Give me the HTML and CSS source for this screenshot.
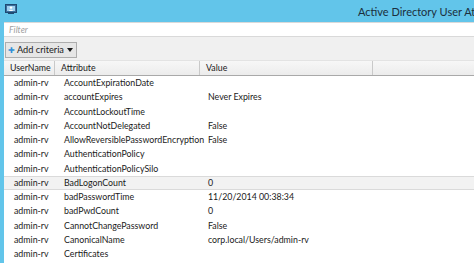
FILE: index.html
```html
<!DOCTYPE html>
<html lang="en">
<head>
    <meta charset="UTF-8">
    <title>Active Directory User Attributes</title>
    <link rel="stylesheet" href="styles.css">
</head>
<body>
    <div class="titlebar">
        <svg class="app-icon" width="12" height="10" viewBox="0 0 12 10">
            <rect x="0.5" y="0.5" width="11" height="8" fill="#3d6f9c" stroke="#1f4a73"/>
            <rect x="2" y="2" width="8" height="5" fill="#9fd0ef"/>
            <circle cx="6" cy="3.6" r="1.2" fill="#ffffff"/>
            <path d="M3.8 7 Q6 4.6 8.2 7 Z" fill="#ffffff"/>
            <rect x="3" y="9" width="6" height="1" fill="#1f4a73"/>
        </svg>
        <span class="title">Active Directory User Attributes</span>
    </div>

    <div class="window">
        <div class="filter-box">Filter</div>

        <div class="toolbar">
            <button class="add-criteria">
                <span class="plus">&#x271A;</span>Add criteria<span class="caret"></span>
            </button>
        </div>

        <div class="grid">
            <div class="grid-head">
                <div class="col col-user">UserName</div>
                <div class="col col-attr">Attribute</div>
                <div class="col col-value">Value</div>
                <div class="col col-rest"></div>
            </div>
            <div class="row"><div class="col-user">admin-rv</div><div class="col-attr">AccountExpirationDate</div><div class="col-value"></div></div>
            <div class="row"><div class="col-user">admin-rv</div><div class="col-attr">accountExpires</div><div class="col-value">Never Expires</div></div>
            <div class="row"><div class="col-user">admin-rv</div><div class="col-attr">AccountLockoutTime</div><div class="col-value"></div></div>
            <div class="row"><div class="col-user">admin-rv</div><div class="col-attr">AccountNotDelegated</div><div class="col-value">False</div></div>
            <div class="row"><div class="col-user">admin-rv</div><div class="col-attr">AllowReversiblePasswordEncryption</div><div class="col-value">False</div></div>
            <div class="row"><div class="col-user">admin-rv</div><div class="col-attr">AuthenticationPolicy</div><div class="col-value"></div></div>
            <div class="row"><div class="col-user">admin-rv</div><div class="col-attr">AuthenticationPolicySilo</div><div class="col-value"></div></div>
            <div class="row selected"><div class="col-user">admin-rv</div><div class="col-attr">BadLogonCount</div><div class="col-value">0</div></div>
            <div class="row"><div class="col-user">admin-rv</div><div class="col-attr">badPasswordTime</div><div class="col-value">11/20/2014 00:38:34</div></div>
            <div class="row"><div class="col-user">admin-rv</div><div class="col-attr">badPwdCount</div><div class="col-value">0</div></div>
            <div class="row"><div class="col-user">admin-rv</div><div class="col-attr">CannotChangePassword</div><div class="col-value">False</div></div>
            <div class="row"><div class="col-user">admin-rv</div><div class="col-attr">CanonicalName</div><div class="col-value">corp.local/Users/admin-rv</div></div>
            <div class="row"><div class="col-user">admin-rv</div><div class="col-attr">Certificates</div><div class="col-value"></div></div>
        </div>
    </div>
</body>
</html>
```

FILE: styles.css
```css
/* window frame */
body {
    margin: 0;
    background-color: #62c5ea;
    font-family: Lato, "Open Sans", sans-serif;
    font-size: 8.8px;
    color: #1a1a1a;
    height: 263px;
    overflow: hidden;
}
.titlebar {
    height: 22px;
    display: flex;
    align-items: center;
    padding-left: 5px;
    overflow: hidden;
    white-space: nowrap;
}
.app-icon {
    flex: none;
    margin-top: -5px;
}
.title {
    margin-left: 341px;
    font-size: 11px;
    color: #1b2f3d;
}
.window {
    margin-left: 4px;
    background-color: #ffffff;
    height: 241px;
    overflow: hidden;
}
.filter-box {
    height: 13px;
    line-height: 13px;
    border-top: 1px solid #d9d9d9;
    border-bottom: 1px solid #d9d9d9;
    padding-left: 5px;
    color: #a0a0a0;
    font-style: italic;
}
.toolbar {
    background-color: #f0f0f0;
    height: 23px;
    display: flex;
    align-items: center;
    padding-left: 1px;
    padding-top: 2px;
    box-sizing: border-box;
}
.add-criteria {
    font-family: inherit;
    font-size: 9.2px;
    color: #1a1a1a;
    height: 16px;
    padding: 0 3px 0 2px;
    background-color: #e6e6e6;
    border: 1px solid #adadad;
    display: flex;
    align-items: center;
    gap: 2px;
}
.plus {
    color: #2f8fd6;
    font-size: 8px;
}
.caret {
    width: 0;
    height: 0;
    border-left: 3.5px solid transparent;
    border-right: 3.5px solid transparent;
    border-top: 4px solid #1a1a1a;
    margin-left: 1px;
}
.grid-head {
    display: flex;
    height: 14px;
    line-height: 14px;
    background: linear-gradient(#f7f7f7, #ececec);
    border-top: 1px solid #e3e3e3;
    border-bottom: 1px solid #a9a9a9;
}
.grid-head .col {
    border-right: 1px solid #c9c9c9;
    padding-left: 6px;
    box-sizing: border-box;
}
.col-user {
    width: 51px;
    flex: none;
}
.col-attr {
    width: 145px;
    flex: none;
}
.col-value {
    width: 173px;
    flex: none;
}
.col-rest {
    flex: 1;
}
.grid-head .col-rest {
    border-right: none;
}
.row {
    display: flex;
    height: 14.25px;
    line-height: 14px;
    white-space: nowrap;
}
.row .col-user {
    padding-left: 10px;
    box-sizing: border-box;
}
.row .col-attr {
    padding-left: 9px;
    box-sizing: border-box;
}
.row .col-value {
    padding-left: 8px;
    box-sizing: border-box;
}
.row.selected {
    background-color: #f2f2f2;
    box-shadow: inset 0 1px 0 #dadada, inset 0 -1px 0 #dadada;
}
```
